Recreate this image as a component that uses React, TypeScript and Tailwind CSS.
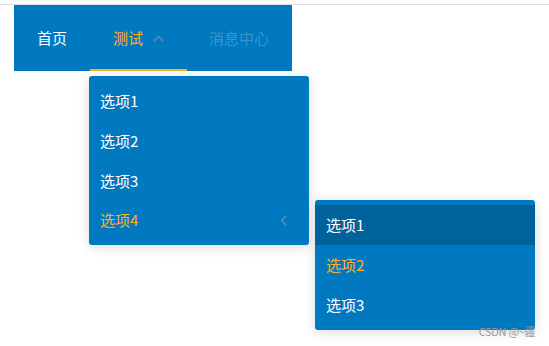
import React from 'react';

const font = { fontFamily: '"Microsoft YaHei", "Noto Sans CJK SC", "Noto Sans", sans-serif' };

const subItems = ['选项1', '选项2', '选项3'];

const App: React.FC = () => {
  return (
    <div className="relative w-[549px] h-[346px] bg-white overflow-hidden" style={font}>
      <div className="h-[4px]" />
      <div className="border-t border-[#dcdfe6]">
        <div className="ml-[14px] flex w-[278px] h-[66px] bg-[#0079c1] text-[15px]">
          <div className="flex items-center px-[23px] text-white">首页</div>
          <div className="relative flex items-center pl-[23px] pr-[23px] text-[#ffb11b]">
            <span>测试</span>
            <svg className="ml-[10px]" width="11" height="7" viewBox="0 0 11 7" fill="none">
              <path d="M1 6 L5.5 1.5 L10 6" stroke="#6a8fae" strokeWidth="1.3" />
            </svg>
            <div className="absolute left-0 right-0 bottom-0 h-[2px] bg-[#ffb11b]" />
          </div>
          <div className="flex items-center px-[22px] text-[#3c95cd]">消息中心</div>
        </div>
      </div>

      {/* first popup */}
      <div className="absolute left-[89px] top-[76px] w-[220px] py-[5px] bg-[#0079c1] rounded-[3px] shadow-[0_2px_12px_rgba(0,0,0,0.15)] text-[15px]">
        {subItems.map((t) => (
          <div key={t} className="h-[40px] flex items-center px-[11px] text-white">
            {t}
          </div>
        ))}
        <div className="h-[39px] flex items-center justify-between pl-[11px] pr-[22px] text-[#ffb11b]">
          <span>选项4</span>
          <svg width="7" height="11" viewBox="0 0 7 11" fill="none">
            <path d="M6 1 L1.5 5.5 L6 10" stroke="#6a8fae" strokeWidth="1.3" />
          </svg>
        </div>
      </div>

      {/* second popup */}
      <div className="absolute left-[315px] top-[200px] w-[220px] py-[5px] bg-[#0079c1] rounded-[3px] shadow-[0_2px_12px_rgba(0,0,0,0.15)] text-[15px]">
        <div className="h-[40px] flex items-center px-[11px] text-white bg-[#00629b]">选项1</div>
        <div className="h-[40px] flex items-center px-[11px] text-[#ffb11b]">选项2</div>
        <div className="h-[40px] flex items-center px-[11px] text-white">选项3</div>
      </div>

      <div className="absolute right-[14px] top-[323px] text-[11px] text-[#9a9a9a] tracking-[-0.3px]">CSDN @~疆</div>
    </div>
  );
};

export default App;
